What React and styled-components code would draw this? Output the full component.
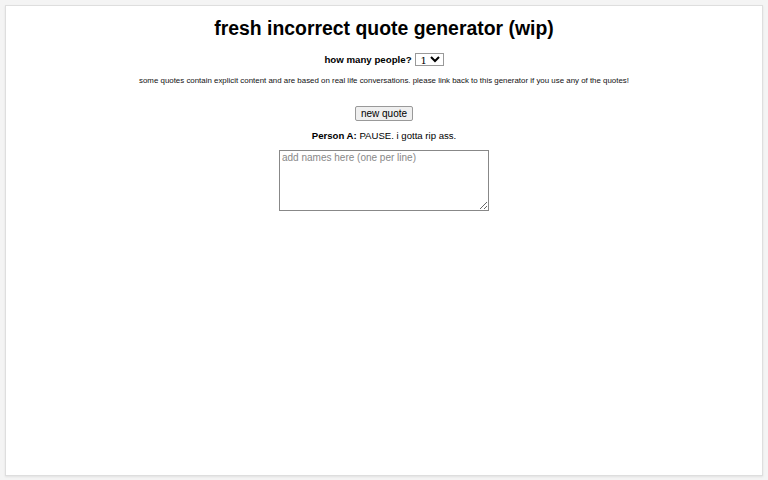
import React from "react";
import styled, { createGlobalStyle } from "styled-components";

const Global = createGlobalStyle`
  html, body { margin: 0; padding: 0; }
  body {
    background: #f4f4f4;
    font-family: "Liberation Sans", Arial, sans-serif;
    color: #000;
  }
`;

const Page = styled.div`
  box-sizing: border-box;
  height: 480px;
  padding: 5px 5px 4px 5px;
`;

const Panel = styled.main`
  box-sizing: border-box;
  height: 100%;
  background: #fff;
  border: 1px solid #dedede;
  box-shadow: 0 1px 2px rgba(0, 0, 0, 0.08);
  display: flex;
  flex-direction: column;
  align-items: center;
  text-align: center;
  padding-top: 10px;
`;

const Title = styled.h1`
  margin: 0;
  font-size: 19.4px;
  font-weight: bold;
  line-height: 24px;
`;

const CountRow = styled.label`
  margin-top: 12px;
  font-size: 9.7px;
  font-weight: bold;
  display: flex;
  align-items: center;
  gap: 3px;
  height: 14px;
`;

const Select = styled.select`
  font-family: "DejaVu Serif", serif;
  font-size: 10px;
  height: 13px;
  width: 29px;
  padding: 0 0 0 1px;
  border: 1px solid #999;
  border-radius: 0;
  background: #fff;
`;

const Notice = styled.p`
  margin: 10px 0 0;
  font-size: 7.9px;
  line-height: 10px;
  color: #111;
`;

const Button = styled.button`
  margin-top: 20px;
  font-family: "Liberation Sans", Arial, sans-serif;
  font-size: 10px;
  height: 15px;
  padding: 0 5px;
  background: #efefef;
  border: 1px solid #999;
  border-radius: 2px;
  color: #000;
`;

const Quote = styled.p`
  margin: 9px 0 0;
  font-size: 9.6px;
  line-height: 12px;
`;

const Speaker = styled.b`
  font-weight: bold;
`;

const Names = styled.textarea`
  margin-top: 8px;
  box-sizing: border-box;
  width: 210px;
  height: 61px;
  font-family: "Liberation Sans", Arial, sans-serif;
  font-size: 10px;
  padding: 1px 2px;
  border: 1px solid #888;
  border-radius: 0;
  &::placeholder { color: #888; }
`;

export default function App() {
  return (
    <>
      <Global />
      <Page>
        <Panel>
          <Title>fresh incorrect quote generator (wip)</Title>
          <CountRow>
            how many people?
            <Select defaultValue="1">
              <option>1</option>
              <option>2</option>
              <option>3</option>
              <option>4</option>
            </Select>
          </CountRow>
          <Notice>
            some quotes contain explicit content and are based on real life conversations. please link back to this generator if you use any of the quotes!
          </Notice>
          <Button>new quote</Button>
          <Quote>
            <Speaker>Person A:</Speaker> PAUSE. i gotta rip ass.
          </Quote>
          <Names placeholder="add names here (one per line)" />
        </Panel>
      </Page>
    </>
  );
}
